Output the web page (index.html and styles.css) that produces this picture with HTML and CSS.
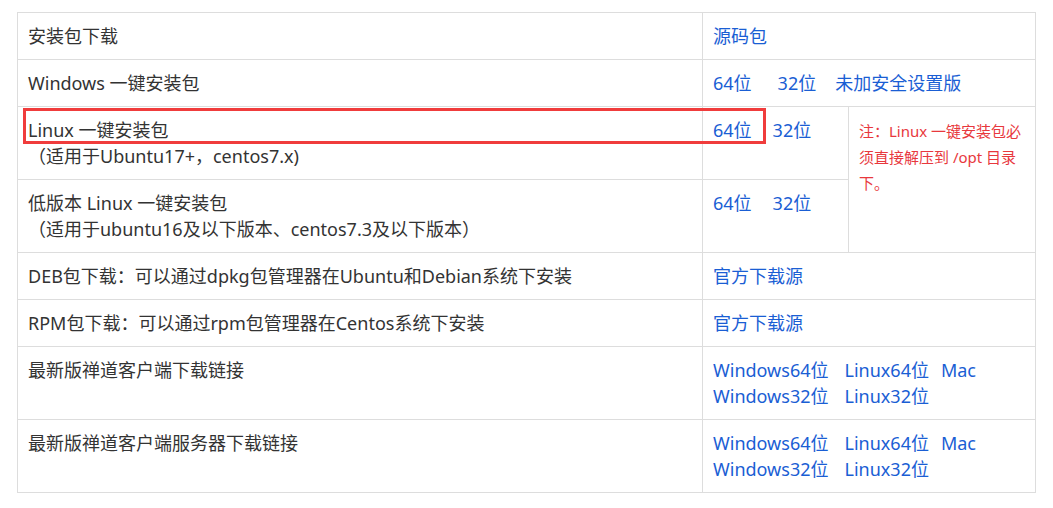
FILE: index.html
```html
<!DOCTYPE html>
<html lang="zh-CN">
<head>
<meta charset="utf-8">
<title>下载</title>
<link rel="stylesheet" href="styles.css">
</head>
<body>
<div class="wrap">
  <table class="dl">
    <colgroup>
      <col class="c1">
      <col class="c2">
      <col class="c3">
    </colgroup>
    <tbody>
      <tr>
        <td>安装包下载</td>
        <td colspan="2"><a href="#">源码包</a></td>
      </tr>
      <tr>
        <td>Windows 一键安装包</td>
        <td colspan="2"><a class="g5" href="#">64位</a><a class="g4s" href="#">32位</a><a href="#">未加安全设置版</a></td>
      </tr>
      <tr>
        <td>Linux 一键安装包<br><span class="sub">（适用于Ubuntu17+，centos7.x)</span></td>
        <td><a class="g4" href="#">64位</a><a href="#">32位</a></td>
        <td rowspan="2" class="note">注：Linux 一键安装包必须直接解压到 /opt 目录下。</td>
      </tr>
      <tr>
        <td>低版本 Linux 一键安装包<br><span class="sub">（适用于ubuntu16及以下版本、centos7.3及以下版本）</span></td>
        <td><a class="g4" href="#">64位</a><a href="#">32位</a></td>
      </tr>
      <tr>
        <td>DEB包下载：可以通过dpkg包管理器在Ubuntu和Debian系统下安装</td>
        <td colspan="2"><a href="#">官方下载源</a></td>
      </tr>
      <tr>
        <td>RPM包下载：可以通过rpm包管理器在Centos系统下安装</td>
        <td colspan="2"><a href="#">官方下载源</a></td>
      </tr>
      <tr>
        <td>最新版禅道客户端下载链接</td>
        <td colspan="2">
          <div class="links"><a class="w" href="#">Windows64位</a><a class="l" href="#">Linux64位</a><a href="#">Mac</a></div>
          <div class="links"><a class="w" href="#">Windows32位</a><a class="l" href="#">Linux32位</a></div>
        </td>
      </tr>
      <tr>
        <td>最新版禅道客户端服务器下载链接</td>
        <td colspan="2">
          <div class="links"><a class="w" href="#">Windows64位</a><a class="l" href="#">Linux64位</a><a href="#">Mac</a></div>
          <div class="links"><a class="w" href="#">Windows32位</a><a class="l" href="#">Linux32位</a></div>
        </td>
      </tr>
    </tbody>
  </table>
  <div class="highlight"></div>
</div>
</body>
</html>
```

FILE: styles.css
```css
html, body {
  margin: 0;
  padding: 0;
  background: #ffffff;
}

body {
  font-family: "Noto Sans", "Noto Sans CJK SC", sans-serif;
  color: #333333;
}

.wrap {
  position: relative;
  width: 1019px;
  margin: 12px 0 0 17px;
}

.dl {
  width: 1019px;
  table-layout: fixed;
  border-collapse: collapse;
  border: 1px solid #dddddd;
}

.c1 { width: 685px; }
.c2 { width: 146px; }

.dl td {
  border: 1px solid #dddddd;
  padding: 10px 10px;
  font-size: 18px;
  line-height: 26px;
  vertical-align: top;
  text-align: left;
  white-space: nowrap;
}

.dl td.note {
  white-space: normal;
  font-size: 15px;
  line-height: 26px;
  color: #e8383d;
  padding-top: 11px;
}

.sub {
  display: inline-block;
}

.dl a {
  color: #1a5ed4;
  text-decoration: none;
}

.g4 { margin-right: 21px; }
.g4s { margin-right: 19px; }
.g5 { margin-right: 26px; }

.links a.w { margin-right: 16px; }
.links a.l { margin-right: 12px; }

.highlight {
  position: absolute;
  left: 6px;
  top: 96px;
  width: 737px;
  height: 30px;
  border: 3px solid #f03c3c;
}
```
